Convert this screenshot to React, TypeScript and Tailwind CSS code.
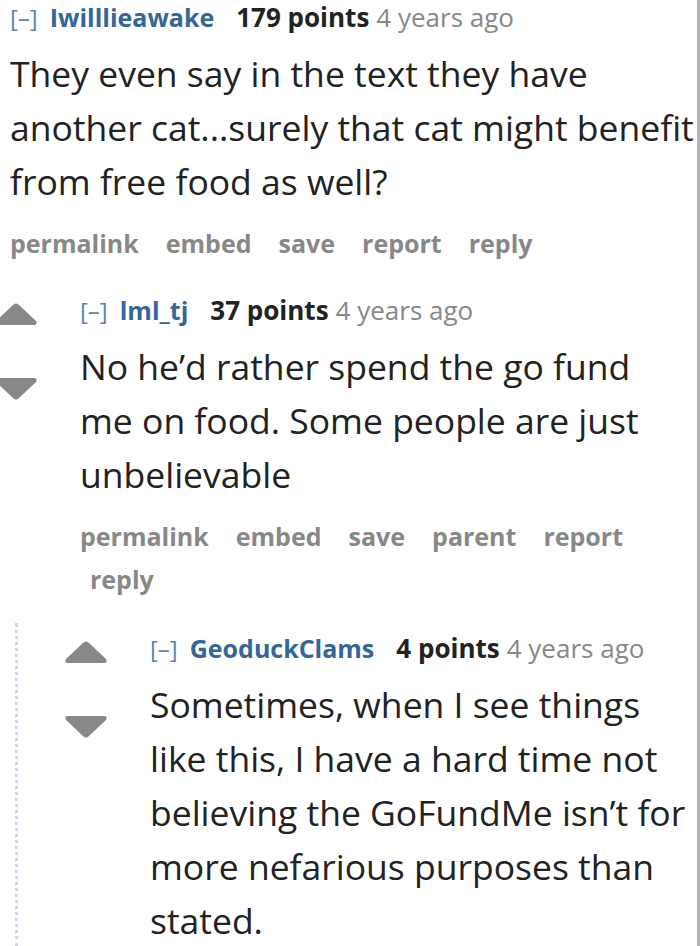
const font = { fontFamily: '"Open Sans", "Noto Sans", sans-serif' }

function Arrows() {
  return (
    <div className="flex w-[44px] shrink-0 flex-col items-center pt-[8px]">
      <svg width="44" height="24" viewBox="0 0 44 24">
        <path d="M19 3 Q22 0 25 3 L42 19 Q44 23 40 23 L4 23 Q0 23 2 19 Z" fill="#888" />
      </svg>
      <svg className="mt-[51px]" width="44" height="24" viewBox="0 0 44 24">
        <path d="M19 21 Q22 24 25 21 L42 5 Q44 1 40 1 L4 1 Q0 1 2 5 Z" fill="#888" />
      </svg>
    </div>
  )
}

function Tagline({ user, points }: { user: string; points: string }) {
  return (
    <p className="flex items-baseline leading-[32px]">
      <span className="text-[24px] text-[#369] opacity-80">[–]</span>
      <span className="ml-[12px] text-[25px] font-bold text-[#369]">{user}</span>
      <span className="ml-[22px] text-[26px] font-bold text-[#222]">{points}</span>
      <span className="ml-[7px] text-[26px] text-[#888]">4 years ago</span>
    </p>
  )
}

function Buttons({ items }: { items: string[] }) {
  return (
    <ul className="mt-[14px] flex flex-wrap text-[25px] font-bold leading-[43px] text-[#888]">
      {items.map((b) => (
        <li key={b} className="pl-[10px] pr-[17px] first:pl-0">
          {b}
        </li>
      ))}
    </ul>
  )
}

function Body({ children }: { children: React.ReactNode }) {
  return <p className="mt-[12px] text-[35.5px] leading-[54px] text-[#222]">{children}</p>
}

export default function App() {
  return (
    <div style={font} className="h-[946px] w-[700px] overflow-hidden border-r-[3px] border-[#b4b4b4] bg-white">
      <div className="pl-[10px] pt-[1px]">
        <Tagline user="Iwilllieawake" points="179 points" />
        <Body>They even say in the text they have another cat...surely that cat might benefit from free food as well?</Body>
        <Buttons items={['permalink', 'embed', 'save', 'report', 'reply']} />
      </div>

      <div className="mt-[29px] flex pr-[30px]">
        <div className="-ml-[6px]">
          <Arrows />
        </div>
        <div className="ml-[42px] flex-1">
          <Tagline user="lml_tj" points="37 points" />
          <Body>No he’d rather spend the go fund me on food. Some people are just unbelievable</Body>
          <Buttons items={['permalink', 'embed', 'save', 'parent', 'report', 'reply']} />
        </div>
      </div>

      <div className="ml-[15px] mt-[22px] border-l-[3px] border-dotted border-[#d2d2f6] pt-[9px]">
        <div className="flex">
          <div className="ml-[46px]">
            <Arrows />
          </div>
          <div className="ml-[42px] flex-1">
            <Tagline user="GeoduckClams" points="4 points" />
            <Body>Sometimes, when I see things like this, I have a hard time not believing the GoFundMe isn’t for more nefarious purposes than stated.</Body>
          </div>
        </div>
      </div>
    </div>
  )
}
